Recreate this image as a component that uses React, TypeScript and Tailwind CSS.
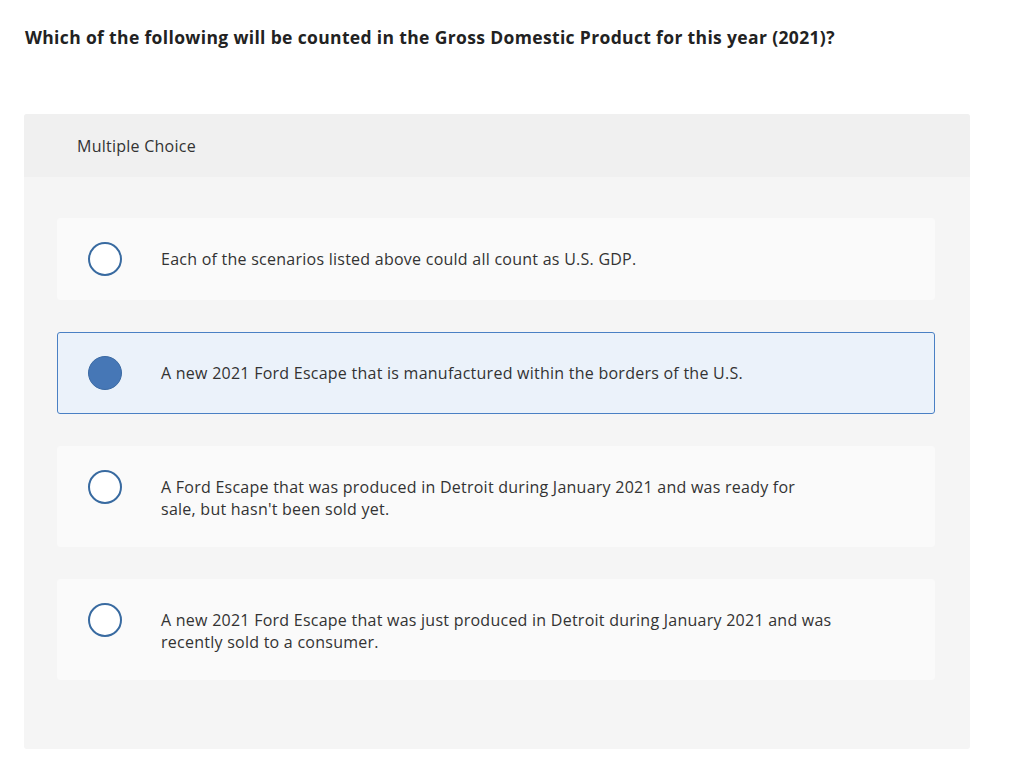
import React, { useState } from "react";

const options = [
  "Each of the scenarios listed above could all count as U.S. GDP.",
  "A new 2021 Ford Escape that is manufactured within the borders of the U.S.",
  "A Ford Escape that was produced in Detroit during January 2021 and was ready for sale, but hasn't been sold yet.",
  "A new 2021 Ford Escape that was just produced in Detroit during January 2021 and was recently sold to a consumer.",
];

export default function App() {
  const [selected, setSelected] = useState(1);

  return (
    <div
      className="min-h-[778px] bg-white text-[#333]"
      style={{ fontFamily: "'Open Sans', Lato, sans-serif" }}
    >
      {/* question */}
      <h1 className="pl-[25px] pt-[26px] text-[17.5px] font-bold leading-[22px] tracking-[0.35px] text-[#222]">
        Which of the following will be counted in the Gross Domestic Product for this year (2021)?
      </h1>

      {/* answer panel */}
      <div className="mt-[66px] ml-[24px] w-[946px] rounded-[3px] bg-[#f5f5f5] pb-[69px]">
        <div className="flex h-[63px] items-center rounded-t-[3px] bg-[#f0f0f0] pl-[53px] text-[16px] tracking-[0.25px]">
          Multiple Choice
        </div>

        <div className="flex flex-col gap-[32px] pl-[33px] pr-[35px] pt-[41px]">
          {options.map((text, i) => {
            const active = selected === i;
            return (
              <button
                key={i}
                onClick={() => setSelected(i)}
                className={
                  active
                    ? "flex items-start rounded-[3px] border border-[#4a80c4] bg-[#ebf2fa] py-[23px] pl-[30px] pr-[102px] text-left"
                    : "flex items-start rounded-[3px] border border-[#fafafa] bg-[#fafafa] py-[23px] pl-[30px] pr-[102px] text-left"
                }
              >
                <span
                  className={
                    active
                      ? "h-[34px] w-[34px] shrink-0 rounded-full border border-[#3b6aa3] bg-[#4677b6]"
                      : "h-[34px] w-[34px] shrink-0 rounded-full border-2 border-[#386aa0] bg-white"
                  }
                />
                <span className="ml-[39px] pt-[6px] pb-[3px] text-[16px] leading-[22px] tracking-[0.25px] text-[#333]">
                  {text}
                </span>
              </button>
            );
          })}
        </div>
      </div>
    </div>
  );
}
